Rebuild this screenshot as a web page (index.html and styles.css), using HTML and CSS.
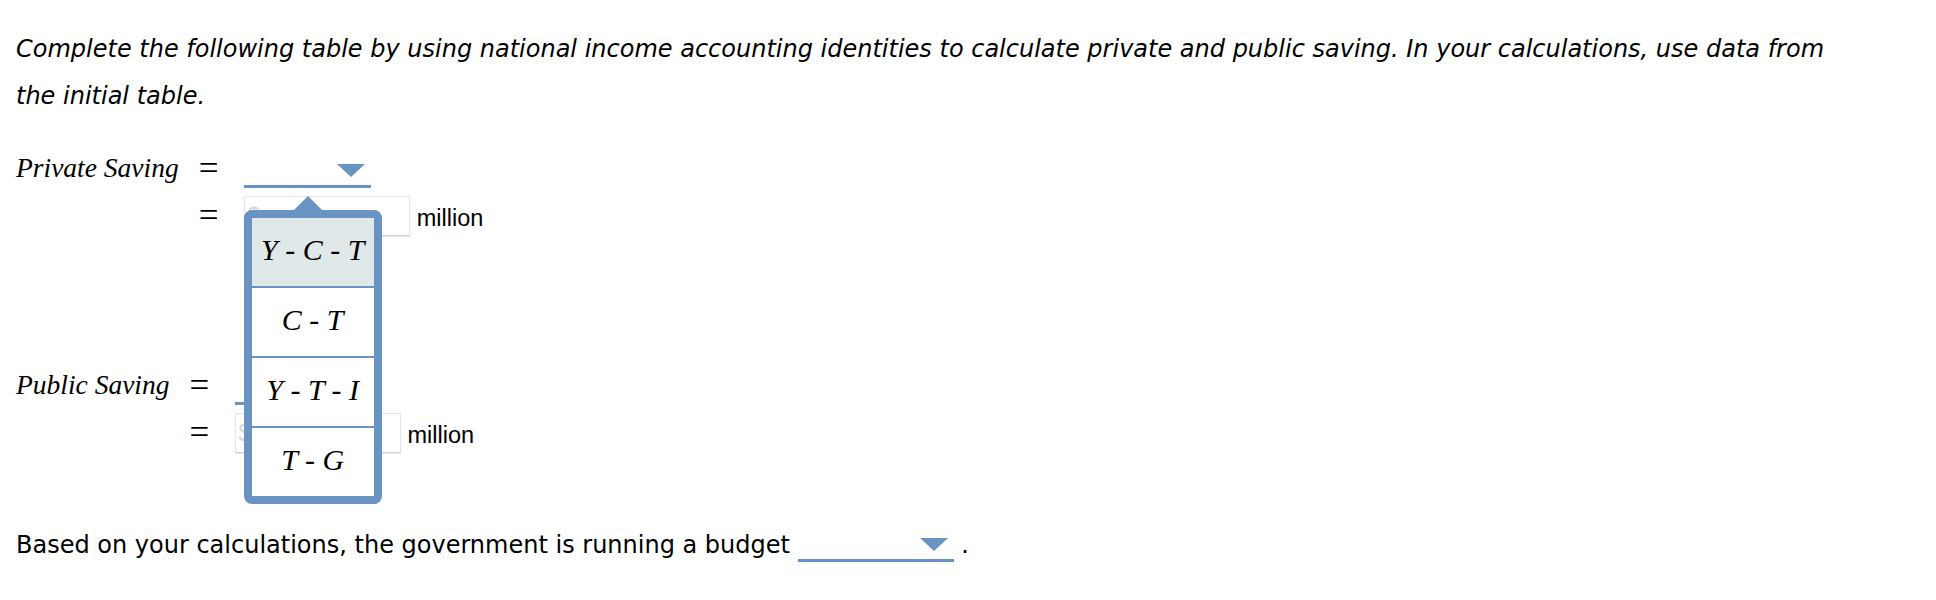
FILE: index.html
```html
<!DOCTYPE html>
<html lang="en">
<head>
<meta charset="utf-8">
<title>Private and public saving</title>
<link rel="stylesheet" href="styles.css">
</head>
<body>
<div class="page">
  <p class="intro">Complete the following table by using national income accounting identities to calculate private and public saving. In your calculations, use data from the initial table.</p>

  <div class="eq eq-private">
    <div class="label">Private Saving</div>
    <div class="equals">=</div>
    <div class="cell">
      <div class="dropdown">
        <span class="caret"></span>
        <div class="popup">
          <div class="opt active">Y - C - T</div>
          <div class="opt">C - T</div>
          <div class="opt">Y - T - I</div>
          <div class="opt">T - G</div>
        </div>
      </div>
    </div>
    <div class="blank"></div>
    <div class="equals second">=</div>
    <div class="cell answer">
      <div class="input"><span class="dollar">$</span></div>
      <span class="unit">million</span>
    </div>
  </div>

  <div class="eq eq-public">
    <div class="label">Public Saving</div>
    <div class="equals">=</div>
    <div class="cell">
      <div class="dropdown"><span class="caret"></span></div>
    </div>
    <div class="blank"></div>
    <div class="equals second">=</div>
    <div class="cell answer">
      <div class="input"><span class="dollar">$</span></div>
      <span class="unit">million</span>
    </div>
  </div>

  <p class="budget">Based on your calculations, the government is running a budget <span class="dropdown wide"><span class="caret"></span></span> .</p>
</div>
</body>
</html>
```

FILE: styles.css
```css
html, body {
  margin: 0;
  padding: 0;
  background: #ffffff;
}

.page {
  padding: 26px 0 0 16px;
  color: #000000;
}

.intro {
  margin: 0;
  width: 1830px;
  font-family: "DejaVu Sans", Verdana, sans-serif;
  font-style: italic;
  font-size: 24px;
  line-height: 47px;
}

.eq {
  display: grid;
  grid-template-columns: auto 45px auto;
  grid-template-rows: 38px 40px;
  row-gap: 8px;
  justify-content: start;
}

.eq-private {
  margin-top: 30px;
}

.eq-public {
  margin-top: 131px;
}

.label {
  font-family: "Liberation Serif", "Times New Roman", serif;
  font-style: italic;
  font-size: 27.5px;
  line-height: 36px;
  padding-right: 20px;
  align-self: start;
  white-space: nowrap;
}

.equals {
  font-family: "Liberation Serif", "Times New Roman", serif;
  font-size: 35px;
  line-height: 38px;
  text-align: left;
}

.equals.second {
  line-height: 40px;
}

.cell {
  display: flex;
  align-items: flex-end;
}

.answer {
  align-items: flex-start;
}

.dropdown {
  position: relative;
  display: inline-block;
  box-sizing: border-box;
  width: 127px;
  height: 24px;
  border-bottom: 3.5px solid #6893c2;
}

.dropdown.wide {
  width: 156px;
  vertical-align: -9px;
}

.caret {
  position: absolute;
  top: 0;
  right: 6px;
  width: 0;
  height: 0;
  border-left: 14px solid transparent;
  border-right: 14px solid transparent;
  border-top: 13px solid #6893c2;
}

.input {
  box-sizing: border-box;
  width: 166px;
  height: 40px;
  border: 1px solid #e4e4e4;
  border-bottom-color: #d0d0d0;
  box-shadow: 0 1px 1px rgba(0, 0, 0, 0.08);
  background: #ffffff;
  font-family: "Liberation Sans", Arial, sans-serif;
  font-size: 23px;
  line-height: 38px;
  padding-left: 3px;
}

.dollar {
  color: #d6d6d6;
}

.unit {
  margin: 9px 0 0 7px;
  font-family: "Liberation Sans", Arial, sans-serif;
  font-size: 23.5px;
  line-height: 27px;
}

.popup {
  position: absolute;
  top: 46px;
  left: 0;
  z-index: 5;
  box-sizing: border-box;
  width: 138px;
  border: 8px solid #6893c2;
  border-radius: 8px;
  background: #ffffff;
}

.popup::before {
  content: "";
  position: absolute;
  top: -22px;
  left: 42px;
  width: 0;
  height: 0;
  border-left: 14px solid transparent;
  border-right: 14px solid transparent;
  border-bottom: 14px solid #6893c2;
}

.opt {
  height: 68px;
  line-height: 64px;
  text-align: center;
  font-family: "Liberation Serif", "Times New Roman", serif;
  font-style: italic;
  font-size: 30px;
  white-space: nowrap;
  border-bottom: 2px solid #6893c2;
}

.opt:last-child {
  border-bottom: none;
}

.opt.active {
  background: #e1e8ea;
}

.budget {
  margin: 69px 0 0 0;
  font-family: "DejaVu Sans", Verdana, sans-serif;
  font-size: 24px;
  line-height: 46px;
}
```
